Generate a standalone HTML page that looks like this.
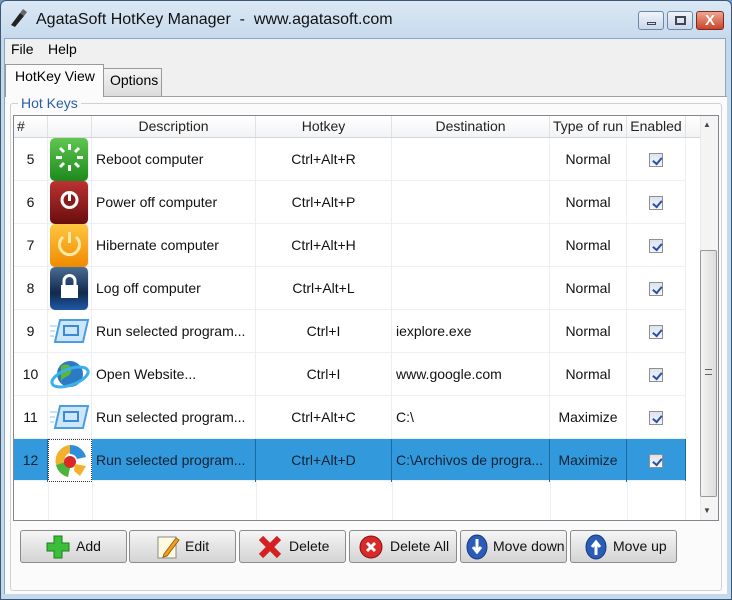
<!DOCTYPE html><html><head><style>
*{margin:0;padding:0;box-sizing:border-box}
body{width:732px;height:600px;overflow:hidden;font-family:"Liberation Sans",sans-serif;font-size:14px;background:#6d9bc4;position:relative}
.a{position:absolute}
#win{left:0;top:0;width:732px;height:600px;border-radius:6px 6px 0 0;background:linear-gradient(#dbe8f4,#c5d9ec 40px);border:1px solid #3a5876}
#client{left:4px;top:38px;width:722px;height:556px;background:#f0f0f0;border:1px solid #8aa6c2}
.row{left:14px;width:672px;height:43px;border-bottom:1px solid #eceff3;color:#111}
.row div{position:absolute;top:0;height:43px;line-height:43px;border-right:1px solid #eceff3;white-space:nowrap;overflow:hidden}
.c0{left:0;width:34px;text-align:center}.c1{left:34px;width:44px}.c2{left:78px;width:164px;padding-left:4px}.c3{left:242px;width:136px;text-align:center}.c4{left:378px;width:158px;padding-left:4px}.c5{left:536px;width:77px;text-align:center}.c6{left:613px;width:59px}
.cb{position:absolute;left:22px;top:15px;width:14px;height:14px;border:1px solid #8f8f8f;background:linear-gradient(#dde3ee,#f5f7fa)}
.cb::after{content:"";position:absolute;left:2px;top:1px;width:7px;height:4px;border-left:2px solid #2a4fa8;border-bottom:2px solid #2a4fa8;transform:rotate(-50deg) translate(-1px,2px)}
.ic{position:absolute;left:2px;top:2px;width:39px;height:39px;border-radius:5px}
.sel{background:#3399dd;color:#123}
.sel div{border-right-color:#1a6aa0}
.btn{top:530px;height:33px;border:1px solid #8b8b8b;border-radius:3px;background:linear-gradient(#f6f6f6,#e4e4e4 50%,#d4d4d4);font-size:14px;line-height:31px;color:#111}
.btn span{position:absolute;top:0}
.hd{top:116px;height:22px;line-height:21px;background:linear-gradient(#fff,#f2f3f5);border-bottom:1px solid #d5d5d5;font-size:14px;color:#222}
.hd div{position:absolute;top:0;height:21px;border-right:1px solid #e1e1e1;text-align:center}
</style></head><body>
<div id="win" class="a"></div>
<svg class="a" style="left:8px;top:8px" width="20" height="20" viewBox="0 0 20 20"><path d="M3 17 L12 5 L16 8 L7 19Z" fill="#222"/><path d="M12 5 L15 1 L19 4 L16 8Z" fill="#666"/></svg>
<div class="a" style="left:36px;top:11px;font-size:16px;color:#111">AgataSoft HotKey Manager&nbsp; - &nbsp;www.agatasoft.com</div>
<div class="a" style="left:638px;top:11px;width:26px;height:19px;border:1px solid #6c87a6;border-radius:3px;background:linear-gradient(#f0f5fa,#c8d8ea)"><div class="a" style="left:8px;top:10px;width:9px;height:3px;border:1px solid #445"></div></div>
<div class="a" style="left:667px;top:11px;width:26px;height:19px;border:1px solid #6c87a6;border-radius:3px;background:linear-gradient(#f0f5fa,#c8d8ea)"><div class="a" style="left:7px;top:4px;width:11px;height:9px;border:2px solid #445"></div></div>
<div class="a" style="left:696px;top:11px;width:28px;height:19px;border:1px solid #7a2a1f;border-radius:3px;background:linear-gradient(#f0a690,#c9442a);color:#fff;font-weight:bold;text-align:center;line-height:17px;font-size:15px">X</div>
<div id="client" class="a"></div>
<div class="a" style="left:11px;top:41px">File</div>
<div class="a" style="left:48px;top:41px">Help</div>
<div class="a" style="left:5px;top:96px;width:722px;height:498px;background:#fbfbfb;border-top:1px solid #a0a0a0"></div>
<div class="a" style="left:103px;top:68px;width:59px;height:28px;border:1px solid #999;border-bottom:none;background:linear-gradient(#f4f4f4,#dcdcdc);padding:3px 0 0 6px">Options</div>
<div class="a" style="left:5px;top:64px;width:99px;height:33px;border:1px solid #999;border-bottom:none;background:#fbfbfb;padding:3px 0 0 9px">HotKey View</div>
<div class="a" style="left:10px;top:103px;width:712px;height:488px;border:1px solid #d0d0d0;border-radius:3px"></div>
<div class="a" style="left:18px;top:95px;background:#fbfbfb;padding:0 3px;color:#2a5ea8">Hot Keys</div>
<div class="a" style="left:13px;top:115px;width:706px;height:406px;background:#fff;border:1px solid #828790"></div>
<div class="a hd" style="left:14px;width:686px">
<div style="left:0;width:34px;text-align:left;padding-left:3px">#</div><div style="left:34px;width:44px"></div><div style="left:78px;width:164px">Description</div><div style="left:242px;width:136px">Hotkey</div><div style="left:378px;width:158px">Destination</div><div style="left:536px;width:77px">Type of run</div><div style="left:613px;width:59px">Enabled</div></div>
<div class="a row" style="top:138px"><div class="c0">5</div><div class="c1"><div class="ic" style="background:linear-gradient(#5fc650,#1c8a1c)"><svg width="39" height="39"><g stroke="#fff" stroke-width="3"><path d="M19.5 6v6M19.5 27v6M6 19.5h6M27 19.5h6M10 10l4 4M25 25l4 4M29 10l-4 4M14 25l-4 4"/></g></svg></div></div><div class="c2">Reboot computer</div><div class="c3">Ctrl+Alt+R</div><div class="c4"></div><div class="c5">Normal</div><div class="c6"><span class="cb"></span></div></div>
<div class="a row" style="top:181px"><div class="c0">6</div><div class="c1"><div class="ic" style="background:linear-gradient(#b33,#6a0d0d)"><svg width="39" height="39"><circle cx="19.5" cy="19" r="9" fill="#fff"/><circle cx="19.5" cy="19" r="6" fill="#8a1a1a"/><rect x="18" y="12" width="3" height="8" fill="#fff"/></svg></div></div><div class="c2">Power off computer</div><div class="c3">Ctrl+Alt+P</div><div class="c4"></div><div class="c5">Normal</div><div class="c6"><span class="cb"></span></div></div>
<div class="a row" style="top:224px"><div class="c0">7</div><div class="c1"><div class="ic" style="background:linear-gradient(#ffc640,#f08a00)"><svg width="39" height="39"><path d="M13 13a10 10 0 1 0 13 0" fill="none" stroke="#ffe9a8" stroke-width="3"/><path d="M19.5 8v11" stroke="#ffe9a8" stroke-width="3"/></svg></div></div><div class="c2">Hibernate computer</div><div class="c3">Ctrl+Alt+H</div><div class="c4"></div><div class="c5">Normal</div><div class="c6"><span class="cb"></span></div></div>
<div class="a row" style="top:267px"><div class="c0">8</div><div class="c1"><div class="ic" style="background:linear-gradient(#4a6c94,#112a4c 60%,#1e5aa8)"><svg width="39" height="39"><path d="M14 18v-4a5.5 5.5 0 0 1 11 0v4" fill="none" stroke="#fff" stroke-width="3"/><rect x="11" y="18" width="17" height="13" fill="#fff"/></svg></div></div><div class="c2">Log off computer</div><div class="c3">Ctrl+Alt+L</div><div class="c4"></div><div class="c5">Normal</div><div class="c6"><span class="cb"></span></div></div>
<div class="a row" style="top:310px"><div class="c0">9</div><div class="c1"><svg class="a" style="left:2px;top:6px" width="40" height="30"><path d="M10 4h28l-5 22H5z" fill="#cde6fa" stroke="#4a9de0" stroke-width="2"/><rect x="14" y="10" width="14" height="9" fill="none" stroke="#3a8ad6" stroke-width="2"/><path d="M0 10h7M0 15h5M0 20h4" stroke="#8cc4ee"/></svg></div><div class="c2">Run selected program...</div><div class="c3">Ctrl+I</div><div class="c4">iexplore.exe</div><div class="c5">Normal</div><div class="c6"><span class="cb"></span></div></div>
<div class="a row" style="top:353px"><div class="c0">10</div><div class="c1"><svg class="a" style="left:1px;top:3px" width="42" height="38"><circle cx="21" cy="18" r="13" fill="#2b7ac4"/><path d="M12 10c6-4 12 0 10 6s-8 4-10 10" fill="#5fb53a"/><ellipse cx="21" cy="21" rx="19" ry="8" fill="none" stroke="#3ab0ee" stroke-width="3" transform="rotate(-20 21 21)"/></svg></div><div class="c2">Open Website...</div><div class="c3">Ctrl+I</div><div class="c4">www.google.com</div><div class="c5">Normal</div><div class="c6"><span class="cb"></span></div></div>
<div class="a row" style="top:396px"><div class="c0">11</div><div class="c1"><svg class="a" style="left:2px;top:6px" width="40" height="30"><path d="M10 4h28l-5 22H5z" fill="#cde6fa" stroke="#4a9de0" stroke-width="2"/><rect x="14" y="10" width="14" height="9" fill="none" stroke="#3a8ad6" stroke-width="2"/><path d="M0 10h7M0 15h5M0 20h4" stroke="#8cc4ee"/></svg></div><div class="c2">Run selected program...</div><div class="c3">Ctrl+Alt+C</div><div class="c4">C:\</div><div class="c5">Maximize</div><div class="c6"><span class="cb"></span></div></div>
<div class="a row sel" style="top:439px;height:42px"><div class="c0">12</div><div class="c1" style="background:#fff;border:1px dotted #333"><svg class="a" style="left:2px;top:2px" width="38" height="38"><path d="M19 3a16 16 0 0 0-14 20l9-3a7 7 0 0 1 5-9z" fill="#f3b02a"/><path d="M5 23a16 16 0 0 0 12 12l2-9a7 7 0 0 1-5-6z" fill="#4ab43a"/><path d="M19 3a16 16 0 0 1 16 12l-9 2a7 7 0 0 0-7-5z" fill="#2e8fd8"/><circle cx="19" cy="20" r="6" fill="#d82828"/><path d="M24 22l11 2-6 10-6-5z" fill="#f3b02a"/></svg></div><div class="c2">Run selected program...</div><div class="c3">Ctrl+Alt+D</div><div class="c4">C:\Archivos de progra...</div><div class="c5">Maximize</div><div class="c6"><span class="cb"></span></div></div>
<div class="a" style="left:14px;top:481px;width:672px;height:39px;border-right:1px solid #eceff3">
<div class="a" style="left:34px;top:0;height:39px;border-left:1px solid #eceff3"></div><div class="a" style="left:78px;top:0;height:39px;border-left:1px solid #eceff3"></div><div class="a" style="left:242px;top:0;height:39px;border-left:1px solid #eceff3"></div><div class="a" style="left:378px;top:0;height:39px;border-left:1px solid #eceff3"></div><div class="a" style="left:536px;top:0;height:39px;border-left:1px solid #eceff3"></div><div class="a" style="left:613px;top:0;height:39px;border-left:1px solid #eceff3"></div></div>
<div class="a" style="left:700px;top:116px;width:18px;height:404px;background:#f4f4f4;border-left:1px solid #e8e8e8"></div>
<div class="a" style="left:703px;top:120px;font-size:8px;color:#444">▲</div>
<div class="a" style="left:703px;top:506px;font-size:8px;color:#444">▼</div>
<div class="a" style="left:700px;top:250px;width:17px;height:247px;border:1px solid #999;border-radius:2px;background:linear-gradient(90deg,#f4f4f4,#dcdcdc)"><div class="a" style="left:4px;top:118px;width:7px;height:6px;border-top:1px solid #666;border-bottom:1px solid #666"></div></div>
<div class="a btn" style="left:20px;width:107px"><svg class="a" style="left:24px;top:3px" width="26" height="26"><path d="M9 2h8v7h7v8h-7v7H9v-7H2V9h7z" fill="#3bbf3b" stroke="#1d7d1d"/></svg><span style="left:55px">Add</span></div>
<div class="a btn" style="left:129px;width:107px"><svg class="a" style="left:26px;top:3px" width="26" height="26"><rect x="2" y="3" width="18" height="21" fill="#fffbe0" stroke="#888"/><path d="M8 20l12-16 3 2-12 16-4 1z" fill="#f0a020" stroke="#a06010"/></svg><span style="left:55px">Edit</span></div>
<div class="a btn" style="left:239px;width:107px"><svg class="a" style="left:17px;top:3px" width="26" height="26"><path d="M4 4l18 18M22 4L4 22" stroke="#d42020" stroke-width="6"/></svg><span style="left:49px">Delete</span></div>
<div class="a btn" style="left:349px;width:108px"><svg class="a" style="left:8px;top:3px" width="26" height="26"><circle cx="13" cy="13" r="11" fill="#d82a2a" stroke="#8a1010"/><path d="M9 9l8 8M17 9l-8 8" stroke="#fff" stroke-width="3"/></svg><span style="left:40px">Delete All</span></div>
<div class="a btn" style="left:460px;width:107px"><svg class="a" style="left:3px;top:3px" width="26" height="26"><ellipse cx="13" cy="13" rx="10" ry="12" fill="#2a5cb8" stroke="#173a80"/><path d="M13 5v12M9 13l4 5 4-5" stroke="#fff" stroke-width="3" fill="none"/></svg><span style="left:32px">Move down</span></div>
<div class="a btn" style="left:570px;width:107px"><svg class="a" style="left:12px;top:3px" width="26" height="26"><ellipse cx="13" cy="13" rx="10" ry="12" fill="#2a5cb8" stroke="#173a80"/><path d="M13 21V9M9 13l4-5 4 5" stroke="#fff" stroke-width="3" fill="none"/></svg><span style="left:42px">Move up</span></div>
</body></html>
